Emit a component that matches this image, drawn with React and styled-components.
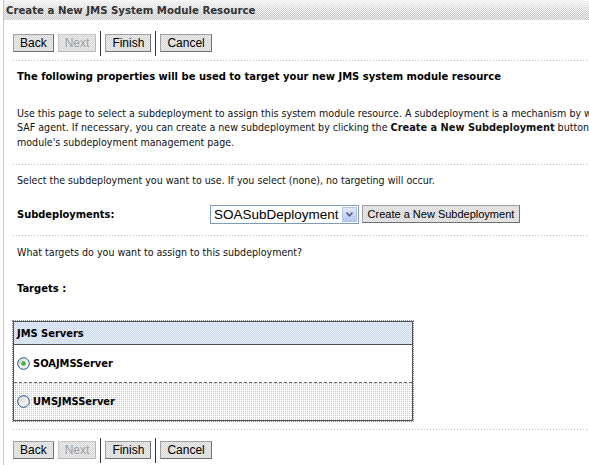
import React from "react";
import styled, { createGlobalStyle, css } from "styled-components";

const Global = createGlobalStyle`
  html, body { margin: 0; padding: 0; background: #fff; overflow: hidden; }
  body { font-family: Tahoma, "DejaVu Sans Condensed", "Liberation Sans", sans-serif; color: #000; }
`;

const checker = (a, b) => css`
  background-image: repeating-conic-gradient(${a} 0 25%, ${b} 0 50%);
  background-size: 2px 2px;
`;

/* one tinted pixel in every 2x2 cell */
const sparse = (dot, base) => css`
  background-color: ${base};
  background-image: conic-gradient(at 1px 1px, ${dot} 0 25%, transparent 0);
  background-size: 2px 2px;
`;

const Frame = styled.div`
  margin-left: 3px;
  border-left: 1px solid #b9cdd2;
  width: 700px;
  min-height: 465px;
`;

const TitleBar = styled.div`
  height: 20px;
  display: flex;
  align-items: center;
  padding-left: 2px;
  background-image: linear-gradient(rgba(255,255,255,0.75), rgba(255,255,255,0) 70%),
    repeating-conic-gradient(#c4c4c4 0 25%, #f4f4f4 0 50%);
  background-size: auto, 2px 2px;
`;

const Title = styled.h1`
  margin: 0;
  font-family: "DejaVu Sans Condensed", "Liberation Sans", sans-serif;
  font-weight: bold;
  font-size: 11.3px;
  color: #333;
`;

const Body = styled.div`
  padding: 0 0 0 9px;
`;

const ButtonBar = styled.div`
  display: flex;
  align-items: center;
  gap: 4px;
  height: 26px;
  margin-top: ${(p) => p.$top}px;
`;

const Btn = styled.button`
  height: 18px;
  padding: 0 6px;
  font-family: "Liberation Sans", Arial, sans-serif;
  font-size: 12px;
  line-height: 16px;
  color: ${(p) => (p.disabled ? "#a0a0a0" : "#000")};
  border: 1px solid ${(p) => (p.disabled ? "#c8c8c8" : "#a0a0a0")};
  border-right-color: ${(p) => (p.disabled ? "#b8b8b8" : "#707070")};
  border-bottom-color: ${(p) => (p.disabled ? "#b8b8b8" : "#707070")};
  ${checker("#d2d2d2", "#f0f0f0")}
  cursor: default;
`;

const Sep = styled.span`
  width: 1px;
  height: 25px;
  background: #333;
`;

const Rule = styled.div`
  height: 1px;
  margin-top: ${(p) => p.$top}px;
  background-image: linear-gradient(90deg, #bcbcbc 1px, transparent 1px);
  background-size: 3px 1px;
`;

const Heading = styled.div`
  font-family: "DejaVu Sans Condensed", "Liberation Sans", sans-serif;
  font-weight: bold;
  font-size: 11.1px;
  padding-left: 4px;
  margin-top: ${(p) => p.$top}px;
  line-height: 14px;
`;

const Text = styled.p`
  margin: ${(p) => p.$top}px 0 0;
  padding-left: 4px;
  font-family: "DejaVu Sans Condensed", "Liberation Sans", sans-serif;
  font-size: 10.6px;
  line-height: 14px;
  white-space: nowrap;
  color: #111;
  b { font-weight: bold; font-size: 10.9px; }
`;

const FieldRow = styled.div`
  display: flex;
  align-items: center;
  margin-top: ${(p) => p.$top}px;
  padding-left: 4px;
  height: 20px;
`;

const FieldLabel = styled.span`
  width: 193px;
  font-family: "DejaVu Sans Condensed", "Liberation Sans", sans-serif;
  font-weight: bold;
  font-size: 11px;
`;

const SelectBox = styled.div`
  display: flex;
  align-items: stretch;
  height: 19px;
  border: 1px solid #7f9db9;
  box-sizing: border-box;
  background: #fff;
`;

const SelectValue = styled.span`
  font-family: "Liberation Sans", Arial, sans-serif;
  font-size: 13.5px;
  line-height: 17px;
  padding: 0 2px 0 3px;
`;

const DropBtn = styled.span`
  width: 15px;
  margin: 1px;
  display: flex;
  align-items: center;
  justify-content: center;
  background: linear-gradient(#dfe7f8, #b8c8f0);
  border: 1px solid #b2c2ea;
  box-sizing: border-box;
`;

const CreateBtn = styled(Btn)`
  margin-left: 3px;
  font-size: 11px;
  padding: 0 5px;
`;

const Table = styled.div`
  margin-top: ${(p) => p.$top}px;
  width: 398px;
  border: 1px solid #505050;
  outline: 1px dotted #8a8a8a;
`;

const HeadCell = styled.div`
  height: 22px;
  display: flex;
  align-items: center;
  padding-left: 3px;
  font-family: "DejaVu Sans Condensed", "Liberation Sans", sans-serif;
  font-weight: bold;
  font-size: 11px;
  border-bottom: 1px solid #505050;
  ${checker("#c4d8f0", "#eef0f6")}
`;

const Row = styled.label`
  height: 37px;
  display: flex;
  align-items: center;
  gap: 3px;
  padding-left: 3px;
  font-family: "DejaVu Sans Condensed", "Liberation Sans", sans-serif;
  font-weight: bold;
  font-size: 11px;
  border-top: ${(p) => (p.$first ? "none" : "1px dashed #6a6a6a")};
  ${(p) => (p.$shaded ? sparse("#c8c8c8", "#fafafa") : "background: #fff;")}
`;

const RadioDot = ({ checked }) => (
  <svg width="13" height="13" viewBox="0 0 13 13">
    <defs>
      <radialGradient id={checked ? "rg1" : "rg2"} cx="0.3" cy="0.3" r="0.9">
        <stop offset="0" stopColor="#dcdcd6" />
        <stop offset="1" stopColor="#ffffff" />
      </radialGradient>
    </defs>
    <circle cx="6.5" cy="6.5" r="5.8" fill={`url(#${checked ? "rg1" : "rg2"})`} stroke="#1c5180" strokeWidth="1" />
    {checked && <circle cx="6.5" cy="6.5" r="2.3" fill="#3fb53f" />}
  </svg>
);

const Buttons = ({ top }) => (
  <ButtonBar $top={top}>
    <Btn>Back</Btn>
    <Btn disabled>Next</Btn>
    <Sep />
    <Btn>Finish</Btn>
    <Sep />
    <Btn>Cancel</Btn>
  </ButtonBar>
);

export default function App() {
  return (
    <>
      <Global />
      <Frame>
        <TitleBar>
          <Title>Create a New JMS System Module Resource</Title>
        </TitleBar>
        <Body>
          <Buttons top={10} />
          <Rule $top={4} />
          <Heading $top={9}>
            The following properties will be used to target your new JMS system module resource
          </Heading>
          <Text $top={22}>
            Use this page to select a subdeployment to assign this system module resource. A subdeployment is a mechanism by which system module resources are grouped and targeted to a server instance, JMS server, or
            <br />
            SAF agent. If necessary, you can create a new subdeployment by clicking the <b>Create a New Subdeployment</b> button, or you can use the system
            <br />
            module's subdeployment management page.
          </Text>
          <Rule $top={15} />
          <Text $top={8}>
            Select the subdeployment you want to use. If you select (none), no targeting will occur.
          </Text>
          <FieldRow $top={17}>
            <FieldLabel>Subdeployments:</FieldLabel>
            <SelectBox>
              <SelectValue>SOASubDeployment</SelectValue>
              <DropBtn>
                <svg width="7" height="5" viewBox="0 0 7 5">
                  <path d="M0.5 0.5 L3.5 3.8 L6.5 0.5" fill="none" stroke="#4d6185" strokeWidth="1.6" />
                </svg>
              </DropBtn>
            </SelectBox>
            <CreateBtn>Create a New Subdeployment</CreateBtn>
          </FieldRow>
          <Rule $top={11} />
          <Text $top={9}>What targets do you want to assign to this subdeployment?</Text>
          <Heading $top={23}>Targets :</Heading>
          <Table $top={25}>
            <HeadCell>JMS Servers</HeadCell>
            <Row $first>
              <RadioDot checked />
              SOAJMSServer
            </Row>
            <Row $shaded>
              <RadioDot />
              UMSJMSServer
            </Row>
          </Table>
          <Rule $top={8} />
          <Buttons top={7} />
        </Body>
      </Frame>
    </>
  );
}
